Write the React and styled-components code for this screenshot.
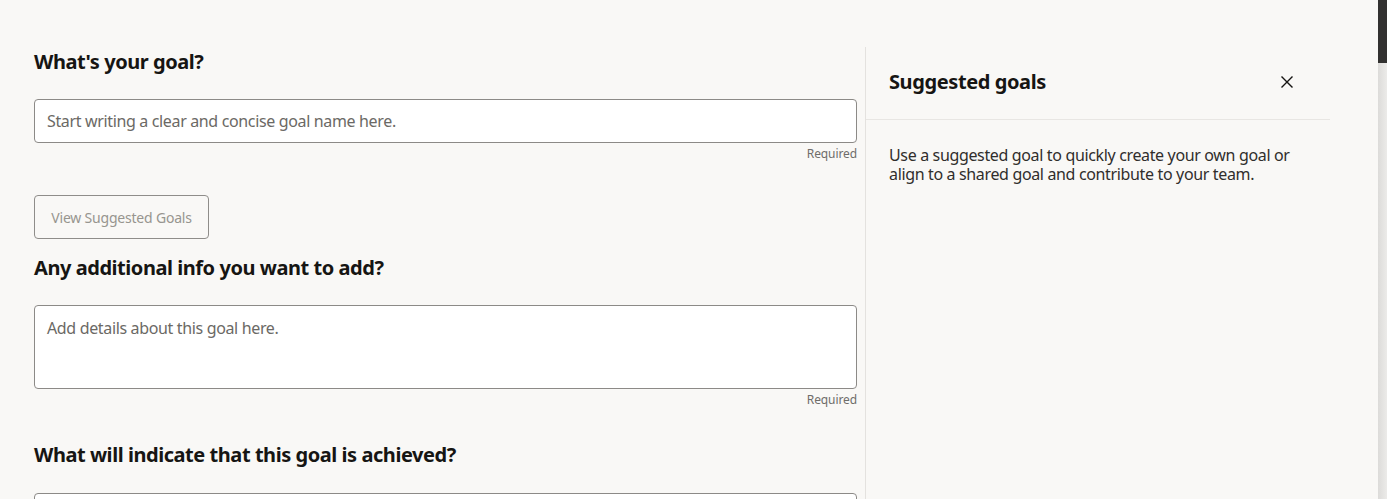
import React from "react";
import styled, { createGlobalStyle } from "styled-components";

const GlobalStyle = createGlobalStyle`
	html, body {
		margin: 0;
		padding: 0;
		background: #f9f8f6;
		font-family: "Noto Sans", "Open Sans", sans-serif;
		color: #161513;
	}
	* {
		box-sizing: border-box;
	}
`;

const Page = styled.div`
	display: grid;
	grid-template-columns: 865px 465px 1fr;
	padding-top: 47px;
	min-height: 3950px;
`;

// page scrollbar as drawn in the screenshot
const ScrollTrack = styled.div`
	position: fixed;
	top: 0;
	right: 0;
	width: 9px;
	height: 100vh;
	background: linear-gradient(to right, #dcdbd9, #ecebe9);
`;

const ScrollThumb = styled.div`
	height: 63px;
	background: #323130;
`;

const Form = styled.div`
	padding: 0 8px 0 34px;
`;

const Heading = styled.h2`
	margin: ${(p) => p.$top || 0}px 0 0;
	font-size: 20px;
	line-height: 24px;
	font-weight: 700;
	color: #161513;
	letter-spacing: -0.45px;
`;

const Field = styled.div`
	margin-top: ${(p) => p.$top || 0}px;
	display: flex;
	flex-direction: column;
`;

const TextInput = styled.input`
	width: 100%;
	height: 44px;
	padding: 0 12px;
	border: 1px solid #8c8a87;
	border-radius: 4px;
	background: #fff;
	font-family: inherit;
	font-size: 16px;
	letter-spacing: -0.35px;
	color: #161513;
	outline: none;
	&::placeholder {
		color: #6b6965;
	}
`;

const TextArea = styled.textarea`
	width: 100%;
	height: 84px;
	padding: 10px 12px;
	border: 1px solid #8c8a87;
	border-radius: 4px;
	background: #fff;
	font-family: inherit;
	font-size: 16px;
	line-height: 24px;
	letter-spacing: -0.35px;
	color: #161513;
	resize: none;
	outline: none;
	display: block;
	&::placeholder {
		color: #6b6965;
	}
`;

const Hint = styled.div`
	align-self: flex-end;
	margin-top: 3px;
	font-size: 12px;
	line-height: 16px;
	letter-spacing: -0.1px;
	color: #6f6d6a;
`;

const SecondaryButton = styled.button`
	margin-top: ${(p) => p.$top || 0}px;
	width: 175px;
	height: 44px;
	border: 1px solid #8f8d8a;
	border-radius: 4px;
	background: transparent;
	font-family: inherit;
	font-size: 14px;
	letter-spacing: -0.2px;
	color: #97958f;
	cursor: pointer;
	display: block;
`;

const Panel = styled.aside`
	border-left: 1px solid #e4e2df;
`;

const PanelHeader = styled.div`
	height: 73px;
	display: flex;
	align-items: center;
	justify-content: space-between;
	padding: 0 31px 2px 23px;
	border-bottom: 1px solid #e8e6e3;
`;

const PanelTitle = styled.h3`
	margin: 0;
	font-size: 20px;
	line-height: 24px;
	font-weight: 700;
	letter-spacing: -0.4px;
`;

const CloseButton = styled.button`
	width: 24px;
	height: 24px;
	padding: 0;
	border: none;
	background: none;
	display: flex;
	align-items: center;
	justify-content: center;
	color: #161513;
	cursor: pointer;
`;

const PanelBody = styled.p`
	margin: 0;
	padding: 26px 23px;
	font-size: 16px;
	line-height: 19px;
	letter-spacing: -0.35px;
	color: #302e2c;
`;

export default function App() {
	return (
		<>
			<GlobalStyle />
			<Page>
				<Form>
					<Heading $top={3}>What's your goal?</Heading>
					<Field $top={25}>
						<TextInput placeholder="Start writing a clear and concise goal name here." />
						<Hint>Required</Hint>
					</Field>
					<SecondaryButton $top={33}>View Suggested Goals</SecondaryButton>
					<Heading $top={17}>Any additional info you want to add?</Heading>
					<Field $top={25}>
						<TextArea placeholder="Add details about this goal here." />
						<Hint>Required</Hint>
					</Field>
					<Heading $top={35}>What will indicate that this goal is achieved?</Heading>
					<Field $top={26}>
						<TextArea />
					</Field>
				</Form>
				<Panel>
					<PanelHeader>
						<PanelTitle>Suggested goals</PanelTitle>
						<CloseButton aria-label="Close">
							<svg width="12" height="12" viewBox="0 0 12 12" fill="none" stroke="currentColor" strokeWidth="1.4" strokeLinecap="square">
								<path d="M1 1L11 11M11 1L1 11" />
							</svg>
						</CloseButton>
					</PanelHeader>
					<PanelBody>
						Use a suggested goal to quickly create your own goal or align to a shared goal and contribute to your team.
					</PanelBody>
				</Panel>
			</Page>
			<ScrollTrack>
				<ScrollThumb />
			</ScrollTrack>
		</>
	);
}
